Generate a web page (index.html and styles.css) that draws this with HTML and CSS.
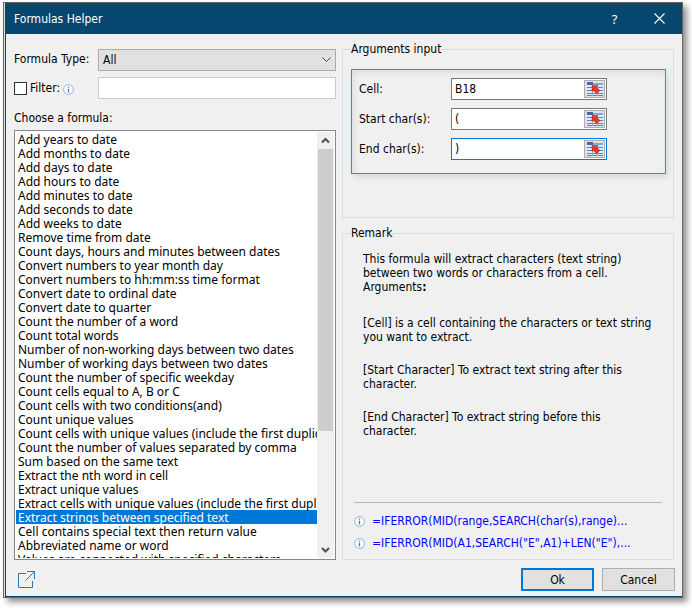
FILE: index.html
```html
<!DOCTYPE html>
<html lang="en">
<head>
    <meta charset="UTF-8">
    <meta name="viewport" content="width=device-width, initial-scale=1.0">
    <title>Formulas Helper</title>
    <link rel="stylesheet" href="styles.css">
</head>
<body>
    <!-- shared icons -->
    <svg class="sprite" aria-hidden="true">
        <symbol id="icon-info" viewBox="0 0 11 11">
            <circle cx="5.5" cy="5.5" r="4.9" fill="#fafcff" stroke="#8fb0dc"/>
            <path d="M5.5 2.6v1.2M5.5 4.8v3.6" stroke="#4a78b8" stroke-width="1.2"/>
        </symbol>
        <symbol id="icon-range" viewBox="0 0 16 14">
            <path d="M0 2h16v12H0z" fill="#e4ecf8"/>
            <path d="M0 0h6v3H0z" fill="#3f67ad"/>
            <path d="M6 1h10v2H6z" fill="#7ea6e0"/>
            <path d="M0 5.5h16M0 8.5h16M0 11.5h16M0 13.5h16" stroke="#5c80bd"/>
            <path d="M5.5 3v11M10.5 3v11" stroke="#8fabd8"/>
            <path d="M5 3.500h6l-1.500 1.700 3.500 3.300-3.300 3.300-3.300-3.300L5 9.500z" fill="#e03a22" stroke="#a82a20" stroke-width=".5"/>
        </symbol>
    </svg>

    <div class="frame">
        <form class="dialog">
            <header class="titlebar">
                <h1 class="title">Formulas Helper</h1>
                <button type="button" class="title-btn" aria-label="Help">?</button>
                <button type="button" class="title-btn" aria-label="Close">
                    <svg width="11" height="11" viewBox="0 0 11 11"><path d="M.5.5l10 10M10.5.5l-10 10" stroke="#fff" stroke-width="1.2"/></svg>
                </button>
            </header>

            <div class="content">
                <div class="left">
                    <div class="row">
                        <label class="row-label" for="type">Formula Type:</label>
                        <select class="type" id="type">
                            <option>All</option>
                        </select>
                    </div>
                    <div class="row">
                        <div class="row-label filter-label">
                            <input type="checkbox" class="check" id="use-filter">
                            <label for="use-filter">Filter:</label>
                            <svg class="info"><use href="#icon-info"/></svg>
                        </div>
                        <input type="text" class="filter" aria-label="Filter text">
                    </div>
                    <label class="list-label" for="formula">Choose a formula:</label>
                    <div class="list-box">
                        <select class="list" id="formula" size="30">
                            <option>Add years to date</option>
                            <option>Add months to date</option>
                            <option>Add days to date</option>
                            <option>Add hours to date</option>
                            <option>Add minutes to date</option>
                            <option>Add seconds to date</option>
                            <option>Add weeks to date</option>
                            <option>Remove time from date</option>
                            <option>Count days, hours and minutes between dates</option>
                            <option>Convert numbers to year month day</option>
                            <option>Convert numbers to hh:mm:ss time format</option>
                            <option>Convert date to ordinal date</option>
                            <option>Convert date to quarter</option>
                            <option>Count the number of a word</option>
                            <option>Count total words</option>
                            <option>Number of non-working days between two dates</option>
                            <option>Number of working days between two dates</option>
                            <option>Count the number of specific weekday</option>
                            <option>Count cells equal to A, B or C</option>
                            <option>Count cells with two conditions(and)</option>
                            <option>Count unique values</option>
                            <option>Count cells with unique values (include the first duplicate)</option>
                            <option>Count the number of values separated by comma</option>
                            <option>Sum based on the same text</option>
                            <option>Extract the nth word in cell</option>
                            <option>Extract unique values</option>
                            <option>Extract cells with unique values (include the first duplicate)</option>
                            <option selected>Extract strings between specified text</option>
                            <option>Cell contains special text then return value</option>
                            <option>Abbreviated name or word</option>
                            <option>Values are connected with specified characters</option>
                        </select>
                        <div class="scrollbar" aria-hidden="true">
                            <svg class="scroll-arrow" viewBox="0 0 17 17"><path d="M5 10.500L8.500 7l3.500 3.500"/></svg>
                            <div class="scroll-track">
                                <div class="scroll-thumb"></div>
                            </div>
                            <svg class="scroll-arrow" viewBox="0 0 17 17"><path d="M5 7l3.500 3.500L12 7"/></svg>
                        </div>
                    </div>
                </div>

                <div class="right">
                    <fieldset class="group arguments">
                        <legend>Arguments input</legend>
                        <div class="highlight">
                            <div class="arg">
                                <label for="arg-cell">Cell:</label>
                                <div class="picker">
                                    <input type="text" id="arg-cell" value="B18">
                                    <button type="button" aria-label="Select range"><svg><use href="#icon-range"/></svg></button>
                                </div>
                            </div>
                            <div class="arg">
                                <label for="arg-start">Start char(s):</label>
                                <div class="picker">
                                    <input type="text" id="arg-start" value="(">
                                    <button type="button" aria-label="Select range"><svg><use href="#icon-range"/></svg></button>
                                </div>
                            </div>
                            <div class="arg">
                                <label for="arg-end">End char(s):</label>
                                <div class="picker active">
                                    <input type="text" id="arg-end" value=")">
                                    <button type="button" aria-label="Select range"><svg><use href="#icon-range"/></svg></button>
                                </div>
                            </div>
                        </div>
                    </fieldset>

                    <fieldset class="group remark">
                        <legend>Remark</legend>
                        <div class="notes">
                            <p class="intro">This formula will extract characters (text string)<br>between two words or characters from a cell.<br>Arguments<b>:</b></p>
                            <p>[Cell] is a cell containing the characters or text string<br>you want to extract.</p>
                            <p>[Start Character] To extract text string after this<br>character.</p>
                            <p>[End Character] To extract string before this<br>character.</p>
                        </div>
                        <div class="formulas">
                            <div class="formula">
                                <svg class="info"><use href="#icon-info"/></svg>
                                <span>=IFERROR(MID(range,SEARCH(char(s),range)...</span>
                            </div>
                            <div class="formula">
                                <svg class="info"><use href="#icon-info"/></svg>
                                <span>=IFERROR(MID(A1,SEARCH("E",A1)+LEN("E"),...</span>
                            </div>
                        </div>
                    </fieldset>
                </div>
            </div>

            <footer class="footer">
                <button type="button" class="export" aria-label="Open in new window">
                    <svg width="18" height="18" viewBox="0 0 18 18" fill="none" stroke="#2e75b6">
                        <path d="M8 2.5H.5v14h14V10"/>
                        <path d="M9 .5h7.500V8M16.500.5l-9 9"/>
                    </svg>
                </button>
                <button type="submit" class="btn btn-default">Ok</button>
                <button type="button" class="btn">Cancel</button>
            </footer>
        </form>
    </div>
</body>
</html>
```

FILE: styles.css
```css
* {
    margin: 0;
    padding: 0;
    box-sizing: border-box;
}
body {
    min-height: 100vh;
    padding: 2px 9px 10px 3px;
    display: flex;
    background-color: #fff;
    color: #000;
    font-family: "DejaVu Sans Condensed", Tahoma, sans-serif;
    font-size: 12px;
    line-height: 14px;
}
input, select, button {
    font: inherit;
    color: inherit;
}
.sprite {
    position: absolute;
    width: 0;
    height: 0;
}

/* window */
.frame {
    flex: 1;
    display: flex;
    padding-left: 1px;
    border: 1px solid #666;
    background-color: #ddd;
    box-shadow: 4px 4px 6px rgba(60, 50, 50, 0.55);
}
.dialog {
    flex: 1;
    min-width: 0;
    display: flex;
    flex-direction: column;
    background-color: #f0f0f0;
    border-left: 1px solid #05476f;
    border-bottom: 1px solid #05476f;
}
.titlebar {
    height: 31px;
    display: flex;
    align-items: center;
    padding-left: 8px;
    background-color: #05476f;
    color: #fff;
}
.title {
    flex: 1;
    font-size: 12px;
    font-weight: normal;
}
.title-btn {
    width: 45px;
    height: 31px;
    display: flex;
    align-items: center;
    justify-content: center;
    border: 0;
    background: none;
    font-family: "Noto Sans", sans-serif;
    font-size: 13px;
}

.content {
    flex: 1;
    display: grid;
    grid-template-columns: 322fr 332fr;
    gap: 6px;
    padding: 8px 8px 0;
}

/* left column */
.left {
    display: flex;
    flex-direction: column;
    min-width: 0;
    padding-top: 7px;
}
.row {
    display: flex;
    margin-bottom: 6px;
}
.row-label {
    width: 84px;
    padding-top: 3px;
    white-space: nowrap;
}
.filter-label {
    display: flex;
    align-items: center;
    gap: 3px;
    padding-top: 0;
}
.check {
    appearance: none;
    width: 13px;
    height: 13px;
    border: 1px solid #333;
    background-color: #fff;
}
.info {
    width: 11px;
    height: 11px;
    flex: none;
}
.filter-label .info {
    margin-top: 3px;
}
.type {
    flex: 1;
    height: 22px;
    padding: 0 4px;
    appearance: none;
    border: 1px solid #adadad;
    border-radius: 0;
    background: #e1e1e1 url("data:image/svg+xml,%3Csvg xmlns='http://www.w3.org/2000/svg' width='9' height='6' fill='none' stroke='%23444'%3E%3Cpath d='M.5.5l4 4 4-4'/%3E%3C/svg%3E") no-repeat right 4px center;
}
.filter {
    flex: 1;
    min-width: 0;
    height: 22px;
    padding: 0 4px;
    border: 1px solid #ccc;
    background-color: #fff;
}
.list-label {
    margin: 6px 0 5px;
}
.list-box {
    flex: 1 1 0;
    min-height: 0;
    display: flex;
    padding: 1px;
    border: 1px solid #828790;
    background-color: #fff;
}
.list {
    flex: 1;
    min-width: 0;
    height: 100%;
    border: 0;
    border-radius: 0;
    background-color: #fff;
    font-family: "Noto Sans", Tahoma, sans-serif;
    outline: none;
    scrollbar-width: none;
}
.list option {
    display: flex;
    align-items: center;
    height: 14px;
    min-height: 14px;
    padding: 0 2px;
    overflow: visible;
}
.list option:checked {
    background: #0078d7 linear-gradient(#0078d7, #0078d7);
    color: #fff;
}
.scrollbar {
    width: 17px;
    display: flex;
    flex-direction: column;
    background-color: #f0f0f0;
}
.scroll-arrow {
    width: 17px;
    height: 17px;
    fill: none;
    stroke: #505050;
    stroke-width: 2;
}
.scroll-track {
    flex: 1;
    padding: 0 1px;
}
.scroll-thumb {
    height: 72%;
    background-color: #cdcdcd;
}

/* right column */
.right {
    display: flex;
    flex-direction: column;
    gap: 8px;
    min-width: 0;
}
.group {
    min-width: 0;
    border: 1px solid #dcdcdc;
}
.arguments {
    padding: 13px 7px 43px 8px;
}
.highlight {
    display: flex;
    flex-direction: column;
    gap: 8px;
    padding: 8px 7px 13px;
    border: 1px solid #1a9be0;
    box-shadow: 2px 3px 6px rgba(0, 0, 0, 0.1), inset 2px 3px 6px rgba(0, 0, 0, 0.08);
}
.arg {
    display: flex;
    align-items: center;
}
.arg label {
    width: 92px;
}
.picker {
    width: 156px;
    height: 22px;
    display: flex;
    border: 1px solid #7a7a7a;
    background-color: #fff;
}
.picker.active {
    border-color: #0078d7;
}
.picker input {
    flex: 1;
    min-width: 0;
    padding-left: 3px;
    border: 0;
    outline: none;
    background: none;
}
.picker button {
    width: 21px;
    margin: 1px;
    display: flex;
    align-items: center;
    justify-content: center;
    border: 1px solid #adadad;
    background-color: #e1e1e1;
}
.picker svg {
    width: 16px;
    height: 14px;
}

.remark {
    flex: 1;
    padding: 12px 8px 8px;
}
.notes {
    min-height: 251px;
    margin: 0 3px;
    padding-left: 9px;
    border-bottom: 1px solid #b9b9b9;
    white-space: nowrap;
}
.notes p {
    margin-bottom: 19px;
}
.notes .intro {
    margin-bottom: 22px;
}
.formulas {
    display: flex;
    flex-direction: column;
    gap: 8px;
    padding: 11px 3px 0;
}
.formula {
    display: flex;
    align-items: center;
    gap: 7px;
    color: #00f;
    white-space: nowrap;
}

/* bottom bar */
.footer {
    display: flex;
    align-items: center;
    gap: 8px;
    padding: 8px 7px 5px 12px;
}
.export {
    margin-right: auto;
    display: flex;
    border: 0;
    background: none;
}
.btn {
    width: 73px;
    height: 23px;
    border: 1px solid #adadad;
    background-color: #e1e1e1;
}
.btn-default {
    border: 2px solid #0078d7;
}
```
